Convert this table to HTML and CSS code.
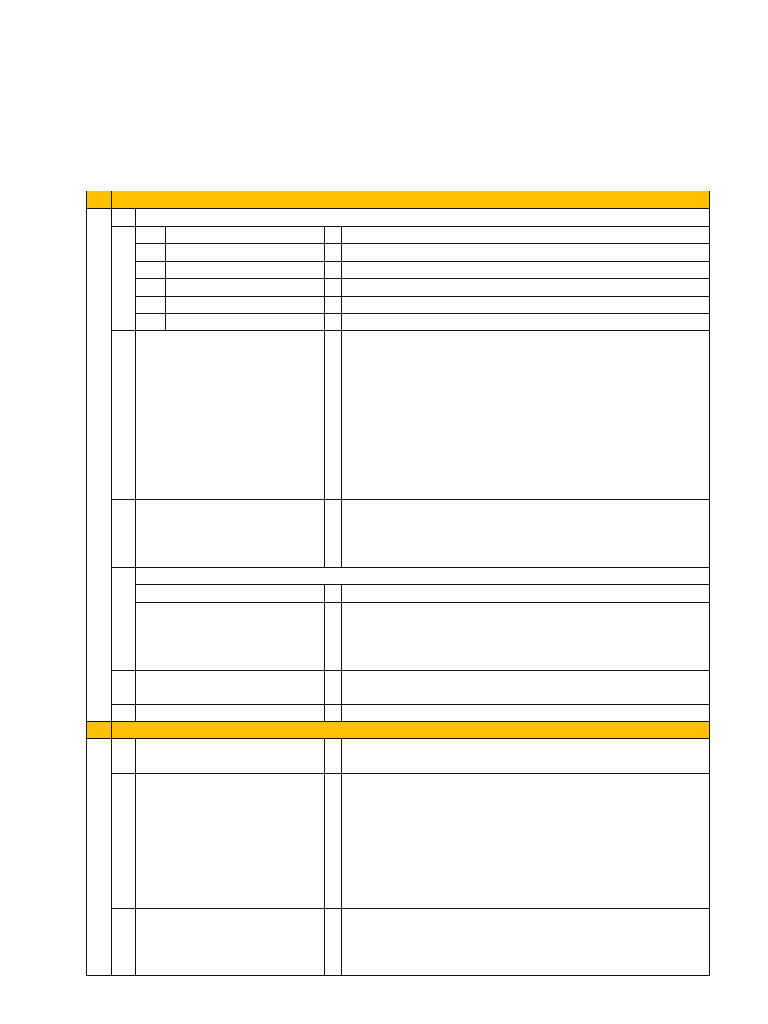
FILE: index.html
```html
<!DOCTYPE html>
<html lang="en">
<head>
<meta charset="utf-8">
<title>Sheet</title>
<link rel="stylesheet" href="styles.css">
</head>
<body>
<div class="sheet">
  <div class="c hd"></div><div class="c hd s5"></div>

  <div class="c r14"></div><div class="c"></div><div class="c s4"></div>

  <div class="c r6"></div><div class="c"></div><div class="c"></div><div class="c"></div><div class="c"></div>
  <div class="c"></div><div class="c"></div><div class="c"></div><div class="c"></div>
  <div class="c"></div><div class="c"></div><div class="c"></div><div class="c"></div>
  <div class="c"></div><div class="c"></div><div class="c"></div><div class="c"></div>
  <div class="c"></div><div class="c"></div><div class="c"></div><div class="c"></div>
  <div class="c"></div><div class="c"></div><div class="c"></div><div class="c"></div>

  <div class="c"></div><div class="c s2"></div><div class="c"></div><div class="c"></div>
  <div class="c"></div><div class="c s2"></div><div class="c"></div><div class="c"></div>

  <div class="c r3"></div><div class="c s4"></div>
  <div class="c s2"></div><div class="c"></div><div class="c"></div>
  <div class="c s2"></div><div class="c"></div><div class="c"></div>

  <div class="c"></div><div class="c s2"></div><div class="c"></div><div class="c"></div>
  <div class="c"></div><div class="c s2"></div><div class="c"></div><div class="c"></div>

  <div class="c hd"></div><div class="c hd s5"></div>

  <div class="c r3"></div><div class="c"></div><div class="c s2"></div><div class="c"></div><div class="c"></div>
  <div class="c"></div><div class="c s2"></div><div class="c"></div><div class="c"></div>
  <div class="c"></div><div class="c s2"></div><div class="c"></div><div class="c"></div>
</div>
</body>
</html>
```
FILE: styles.css
```css
html, body {
  margin: 0;
  padding: 0;
  background: #ffffff;
  font-family: "Liberation Sans", Arial, sans-serif;
}

.sheet {
  margin: 191px 0 0 86px;
  width: 624px;
  box-sizing: border-box;
  padding: 0 1px 1px 1px;
  background: #111111;
  display: grid;
  gap: 1px;
  grid-template-columns: 24px 23px 29px 158px 16px 367px;
  grid-template-rows: 17px 17px 16px 17px 16px 17px 16px 16px 168px 67px 16px 17px 67px 33px 16px 16px 34px 134px 66px;
}

.c {
  background: #ffffff;
}

.hd {
  background: #ffc000;
}

.s2 { grid-column: span 2; }
.s4 { grid-column: span 4; }
.s5 { grid-column: span 5; }
.r3 { grid-row: span 3; }
.r6 { grid-row: span 6; }
.r14 { grid-row: span 14; }
```
